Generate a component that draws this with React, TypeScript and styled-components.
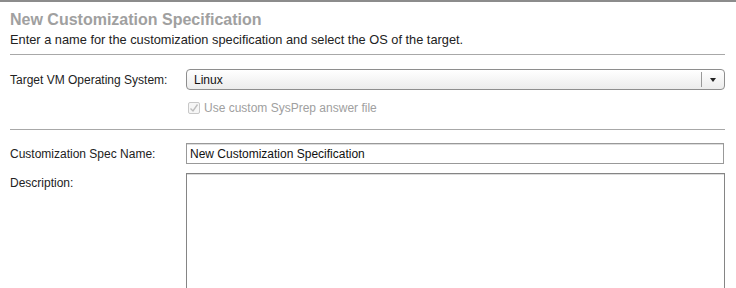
import React from "react";
import styled, { createGlobalStyle } from "styled-components";

const Global = createGlobalStyle`
  html, body { margin: 0; padding: 0; background: #fff; }
  body { font-family: "Liberation Sans", Arial, sans-serif; font-size: 12px; color: #333; }
`;

const Page = styled.div`
  width: 736px;
  height: 288px;
  overflow: hidden;
  box-sizing: border-box;
  border-top: 2px solid #8c8c8c;
  padding: 8px 11px 0 10px;
`;

const Title = styled.h1`
  margin: 0;
  font-size: 16px;
  font-weight: bold;
  color: #a0a0a0;
  line-height: 19px;
`;

const Subtitle = styled.p`
  margin: 3px 0 0;
  font-size: 12.8px;
  line-height: 15px;
  color: #222;
`;

const Separator = styled.hr<{ $top: number; $bottom: number }>`
  border: 0;
  border-top: 1px solid #a8a8a8;
  margin: ${(p) => p.$top}px 0 ${(p) => p.$bottom}px;
`;

const Grid = styled.div`
  display: grid;
  grid-template-columns: 176px 1fr;
  align-items: center;
`;

const Label = styled.label<{ $alignTop?: boolean }>`
  font-size: 12px;
  color: #222;
  align-self: ${(p) => (p.$alignTop ? "start" : "center")};
  padding-top: ${(p) => (p.$alignTop ? "3px" : "0")};
`;

const Select = styled.div`
  height: 21px;
  box-sizing: border-box;
  border: 1px solid #8e8e8e;
  border-radius: 4px;
  background: linear-gradient(#ffffff, #ececec);
  display: flex;
  align-items: center;
`;

const SelectValue = styled.span`
  flex: 1;
  padding-left: 7px;
  font-size: 12px;
  color: #111;
`;

const SelectButton = styled.span`
  width: 22px;
  height: 15px;
  border-left: 1px solid #999;
  display: flex;
  align-items: center;
  justify-content: center;
`;

const Arrow = styled.span`
  width: 0;
  height: 0;
  border-left: 3px solid transparent;
  border-right: 3px solid transparent;
  border-top: 4px solid #222;
`;

const CheckRow = styled.div`
  display: flex;
  align-items: center;
  gap: 4px;
  margin-top: 11px;
  padding-left: 2px;
  color: #a0a0a0;
  font-size: 12px;
`;

const CheckBox = styled.span`
  width: 12px;
  height: 12px;
  box-sizing: border-box;
  border: 1px solid #c8c8c8;
  border-radius: 2px;
  background: #f6f6f6;
  display: flex;
  align-items: center;
  justify-content: center;
`;

const Input = styled.div`
  height: 21px;
  box-sizing: border-box;
  border: 1px solid #999;
  box-shadow: inset 0 1px 0 #ddd;
  padding: 1px 0 0 3px;
  margin-right: 1px;
  font-size: 12px;
  color: #111;
  display: flex;
  align-items: center;
`;

const TextArea = styled.div`
  height: 140px;
  box-sizing: border-box;
  border: 1px solid #858585;
  box-shadow: inset 0 1px 0 #ddd;
`;

const Spacer = styled.div<{ $h: number }>`
  height: ${(p) => p.$h}px;
  grid-column: 1 / -1;
`;

export default function App() {
  return (
    <>
      <Global />
      <Page>
        <Title>New Customization Specification</Title>
        <Subtitle>Enter a name for the customization specification and select the OS of the target.</Subtitle>
        <Separator $top={7} $bottom={14} />
        <Grid>
          <Label>Target VM Operating System:</Label>
          <Select>
            <SelectValue>Linux</SelectValue>
            <SelectButton>
              <Arrow />
            </SelectButton>
          </Select>
          <div />
          <CheckRow>
            <CheckBox>
              <svg width="10" height="10" viewBox="0 0 10 10">
                <path d="M1.5 5.5 L4 8 L8.5 1.5" fill="none" stroke="#bdbdbd" strokeWidth="1.4" />
              </svg>
            </CheckBox>
            <span>Use custom SysPrep answer file</span>
          </CheckRow>
        </Grid>
        <Separator $top={14} $bottom={13} />
        <Grid>
          <Label>Customization Spec Name:</Label>
          <Input>New Customization Specification</Input>
          <Spacer $h={9} />
          <Label $alignTop>Description:</Label>
          <TextArea />
        </Grid>
      </Page>
    </>
  );
}
